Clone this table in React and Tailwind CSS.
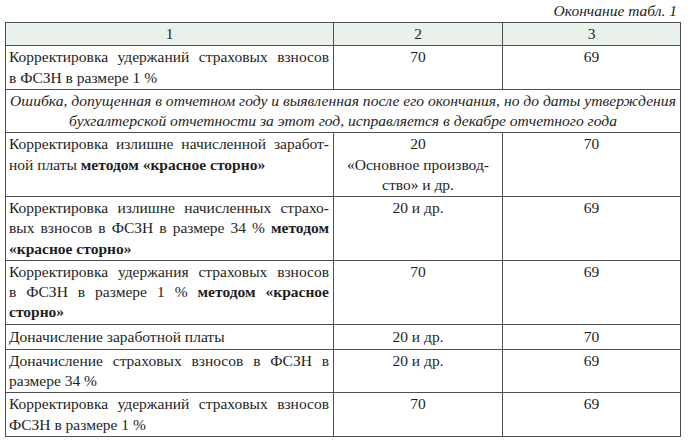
const J = ({ children }) => (
  <div className="text-justify [text-align-last:justify] whitespace-nowrap">{children}</div>
);
const L = ({ children }) => <div className="whitespace-nowrap">{children}</div>;

const td1 = "border border-[#4f4f4f] pl-[3px] pr-[4px] py-px align-top overflow-hidden";
const tdc = "border border-[#4f4f4f] px-[3px] py-px align-top text-center overflow-hidden";

export default function App() {
  return (
    <div className="w-[700px] h-[440px] bg-white text-[#1e1e1e] text-[15.5px] leading-[20.25px] [font-family:'Liberation_Serif',serif] overflow-hidden">
      <div className="h-[22px] pt-[1px] pr-[23px] text-right italic leading-[20px]">Окончание табл. 1</div>
      <table className="ml-[5px] w-[675px] border-collapse table-fixed">
        <colgroup>
          <col className="w-[328px]" />
          <col className="w-[169px]" />
          <col className="w-[178px]" />
        </colgroup>
        <tbody>
          <tr className="bg-[#e8f1ea]">
            <td className={tdc}>1</td>
            <td className={tdc}>2</td>
            <td className={tdc}>3</td>
          </tr>
          <tr>
            <td className={td1}>
              <J>Корректировка удержаний страховых взносов</J>
              <L>в ФСЗН в размере 1 %</L>
            </td>
            <td className={tdc}>70</td>
            <td className={tdc}>69</td>
          </tr>
          <tr>
            <td colSpan={3} className={tdc + " italic px-px text-[15.6px]"}>
              <L>Ошибка, допущенная в отчетном году и выявленная после его окончания, но до даты утверждения</L>
              <L>бухгалтерской отчетности за этот год, исправляется в декабре отчетного года</L>
            </td>
          </tr>
          <tr>
            <td className={td1}>
              <J>Корректировка излишне начисленной заработ-</J>
              <L>
                ной платы <b>методом «красное сторно»</b>
              </L>
            </td>
            <td className={tdc}>
              <L>20</L>
              <L>«Основное производ-</L>
              <L>ство» и др.</L>
            </td>
            <td className={tdc}>70</td>
          </tr>
          <tr>
            <td className={td1}>
              <J>Корректировка излишне начисленных страхо-</J>
              <J>
                вых взносов в ФСЗН в размере 34 % <b>методом</b>
              </J>
              <L>
                <b>«красное сторно»</b>
              </L>
            </td>
            <td className={tdc}>20 и др.</td>
            <td className={tdc}>69</td>
          </tr>
          <tr>
            <td className={td1}>
              <J>Корректировка удержания страховых взносов</J>
              <J>
                в ФСЗН в размере 1 % <b>методом «красное</b>
              </J>
              <L>
                <b>сторно»</b>
              </L>
            </td>
            <td className={tdc}>70</td>
            <td className={tdc}>69</td>
          </tr>
          <tr>
            <td className={td1 + " pt-[2px] pb-[2px]"}>
              <L>Доначисление заработной платы</L>
            </td>
            <td className={tdc + " pt-[2px] pb-[2px]"}>20 и др.</td>
            <td className={tdc + " pt-[2px] pb-[2px]"}>70</td>
          </tr>
          <tr>
            <td className={td1}>
              <J>Доначисление страховых взносов в ФСЗН в</J>
              <L>размере 34 %</L>
            </td>
            <td className={tdc}>20 и др.</td>
            <td className={tdc}>69</td>
          </tr>
          <tr>
            <td className={td1}>
              <J>Корректировка удержаний страховых взносов</J>
              <L>ФСЗН в размере 1 %</L>
            </td>
            <td className={tdc}>70</td>
            <td className={tdc}>69</td>
          </tr>
        </tbody>
      </table>
    </div>
  );
}
